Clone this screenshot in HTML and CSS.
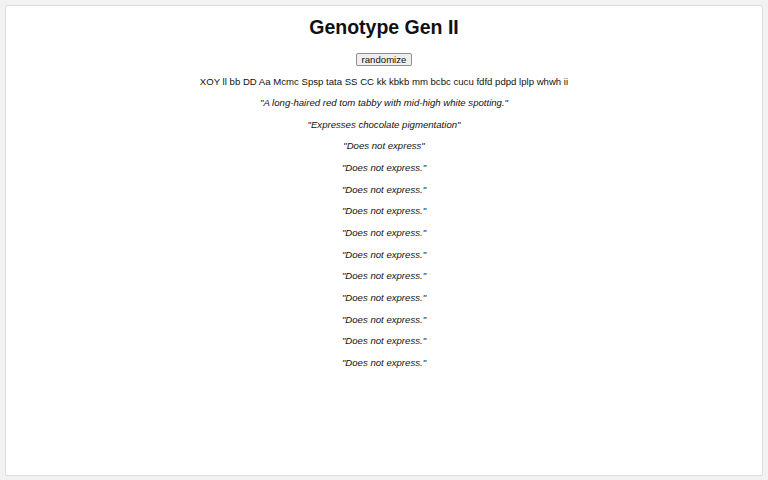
FILE: index.html
```html
<!DOCTYPE html>
<html lang="en">
<head>
    <meta charset="UTF-8">
    <meta name="viewport" content="width=device-width, initial-scale=1.0">
    <title>Genotype Gen II</title>
    <link rel="stylesheet" href="styles.css">
</head>
<body>
    <div class="container">
        <h1>Genotype Gen II</h1>
        <button id="randomize">randomize</button>
        <p class="genotype">XOY ll bb DD Aa Mcmc Spsp tata SS CC kk kbkb mm bcbc cucu fdfd pdpd lplp whwh ii</p>
        <p class="phenotype">"A long-haired red tom tabby with mid-high white spotting."</p>
        <p class="phenotype">"Expresses chocolate pigmentation"</p>
        <p class="phenotype">"Does not express"</p>
        <p class="phenotype">"Does not express."</p>
        <p class="phenotype">"Does not express."</p>
        <p class="phenotype">"Does not express."</p>
        <p class="phenotype">"Does not express."</p>
        <p class="phenotype">"Does not express."</p>
        <p class="phenotype">"Does not express."</p>
        <p class="phenotype">"Does not express."</p>
        <p class="phenotype">"Does not express."</p>
        <p class="phenotype">"Does not express."</p>
        <p class="phenotype">"Does not express."</p>
    </div>
</body>
</html>
```
FILE: styles.css
```css
body {
    font-family: "Liberation Sans", Arial, sans-serif;
    background-color: #f2f2f2;
    color: #111;
    text-align: center;
    margin: 0;
    padding: 5px;
}

.container {
    height: 471px;
    box-sizing: border-box;
    background: #fff;
    border: 1px solid #dcdcdc;
    border-radius: 2px;
    padding-top: 10px;
}

h1 {
    margin: 0 0 14px;
    font-size: 19.5px;
    line-height: 23px;
    color: #111;
}

button {
    display: block;
    margin: 0 auto 9.5px;
    font-family: "Liberation Sans", Arial, sans-serif;
    font-size: 9.6px;
    line-height: 11px;
    padding: 0 5px;
    background-color: #efefef;
    border: 1px solid #8f8f8f;
    border-radius: 2px;
    color: #111;
}

p {
    font-size: 9.6px;
    line-height: 11px;
    margin: 0 0 10.65px;
}

.phenotype {
    font-style: italic;
}
```
